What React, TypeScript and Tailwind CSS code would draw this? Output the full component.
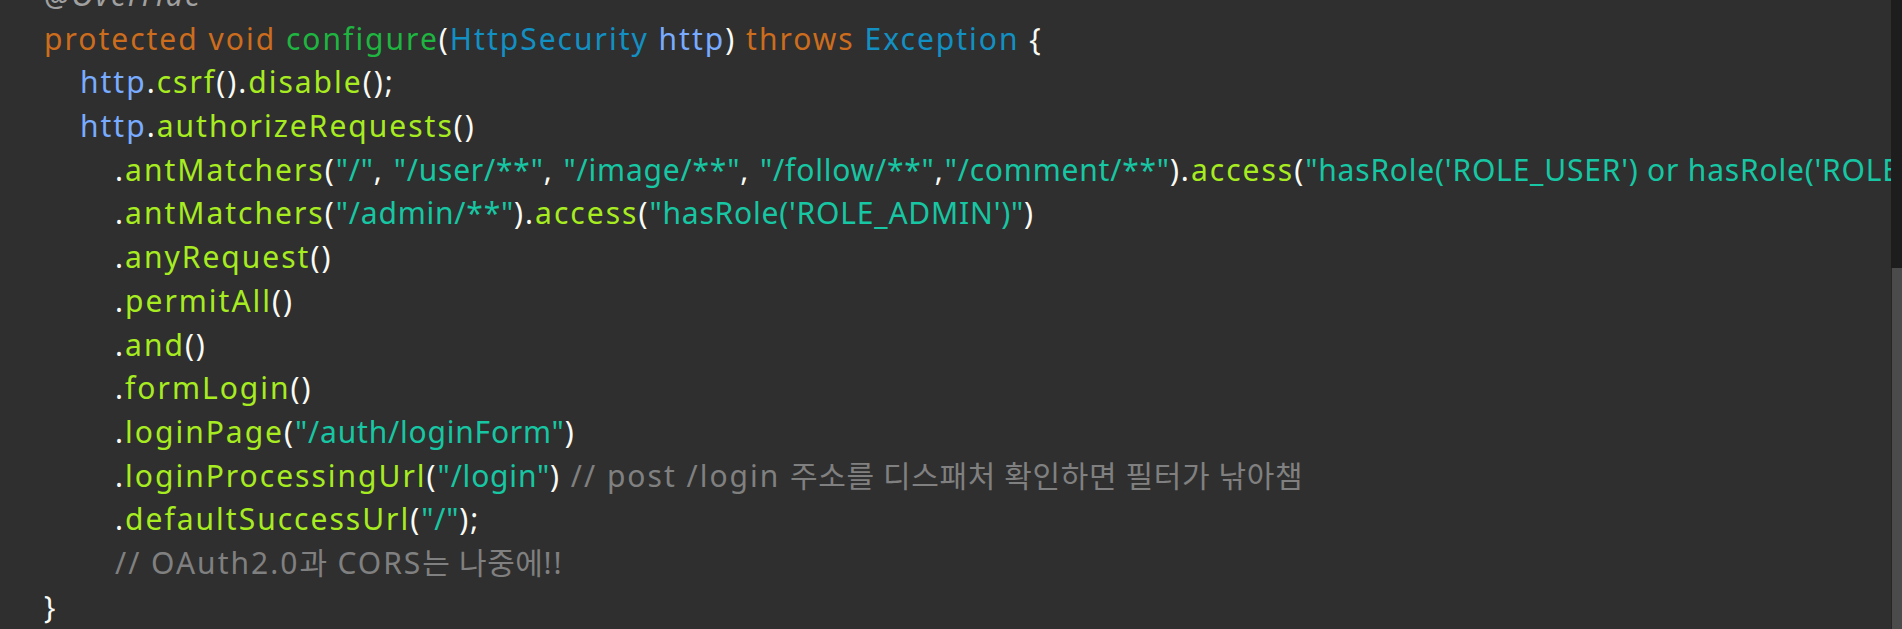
const color = {
  a: "text-[#a0a0a0] italic",
  k: "text-[#cc6c1d]",
  m: "text-[#1eb540]",
  t: "text-[#1290c3]",
  p: "text-[#79abff]",
  c: "text-[#a7ec21]",
  s: "text-[#17c6a3] tracking-[0.8px]",
  o: "text-[#f9faf4]",
  cm: "text-[#808080]",
  ko: "text-[#808080] tracking-[0.6px]",
  w: "",
} as const;

type Tok = [keyof typeof color, string];

const lines: { indent: number; toks: Tok[] }[] = [
  { indent: 0, toks: [["a", "@Override"]] },
  {
    indent: 0,
    toks: [
      ["k", "protected"], ["w", " "], ["k", "void"], ["w", " "], ["m", "configure"], ["o", "("],
      ["t", "HttpSecurity"], ["w", " "], ["p", "http"], ["o", ")"], ["w", " "], ["k", "throws"],
      ["w", " "], ["t", "Exception"], ["w", " "], ["o", "{"],
    ],
  },
  {
    indent: 1,
    toks: [["p", "http"], ["o", "."], ["c", "csrf"], ["o", "()."], ["c", "disable"], ["o", "();"]],
  },
  { indent: 1, toks: [["p", "http"], ["o", "."], ["c", "authorizeRequests"], ["o", "()"]] },
  {
    indent: 2,
    toks: [
      ["o", "."], ["c", "antMatchers"], ["o", "("], ["s", "\"/\""], ["o", ", "], ["s", "\"/user/**\""],
      ["o", ", "], ["s", "\"/image/**\""], ["o", ", "], ["s", "\"/follow/**\""], ["o", ","],
      ["s", "\"/comment/**\""], ["o", ")."], ["c", "access"], ["o", "("],
      ["s", "\"hasRole('ROLE_USER') or hasRole('ROLE_ADMIN')\""], ["o", ")"],
    ],
  },
  {
    indent: 2,
    toks: [
      ["o", "."], ["c", "antMatchers"], ["o", "("], ["s", "\"/admin/**\""], ["o", ")."], ["c", "access"],
      ["o", "("], ["s", "\"hasRole('ROLE_ADMIN')\""], ["o", ")"],
    ],
  },
  { indent: 2, toks: [["o", "."], ["c", "anyRequest"], ["o", "()"]] },
  { indent: 2, toks: [["o", "."], ["c", "permitAll"], ["o", "()"]] },
  { indent: 2, toks: [["o", "."], ["c", "and"], ["o", "()"]] },
  { indent: 2, toks: [["o", "."], ["c", "formLogin"], ["o", "()"]] },
  {
    indent: 2,
    toks: [["o", "."], ["c", "loginPage"], ["o", "("], ["s", "\"/auth/loginForm\""], ["o", ")"]],
  },
  {
    indent: 2,
    toks: [
      ["o", "."], ["c", "loginProcessingUrl"], ["o", "("], ["s", "\"/login\""], ["o", ")"], ["w", " "],
      ["cm", "// post /login "], ["ko", "주소를 디스패처 확인하면 필터가 낚아챔"],
    ],
  },
  {
    indent: 2,
    toks: [["o", "."], ["c", "defaultSuccessUrl"], ["o", "("], ["s", "\"/\""], ["o", ");"]],
  },
  {
    indent: 2,
    toks: [["cm", "// OAuth2.0"], ["ko", "과"], ["cm", " CORS"], ["ko", "는 나중에"], ["cm", "!!"]],
  },
  { indent: 0, toks: [["o", "}"]] },
];

const indentClass = ["pl-[44px]", "pl-[80px]", "pl-[115px]"];

export default function App() {
  return (
    <div className="flex h-[629px] w-full overflow-hidden bg-[#2f2f2f]">
      <div
        className="min-w-0 flex-1 overflow-hidden text-[30px] tracking-[2px]"
        style={{ fontFamily: '"Noto Sans", "Noto Sans CJK KR", sans-serif' }}
      >
        <div className="-mt-[27px]">
          {lines.map((line, i) => (
            <div
              key={i}
              className={`h-[43.7px] whitespace-pre leading-[43.7px] ${indentClass[line.indent]}`}
            >
              {line.toks.map(([kind, text], j) => (
                <span key={j} className={color[kind]}>
                  {text}
                </span>
              ))}
            </div>
          ))}
        </div>
      </div>
      <div className="flex w-[11px] shrink-0 flex-col">
        <div className="h-[268px] bg-[#1d1d1d]" />
        <div className="flex-1 border-l border-[#262626] bg-[#4b4b4b]" />
      </div>
    </div>
  );
}
